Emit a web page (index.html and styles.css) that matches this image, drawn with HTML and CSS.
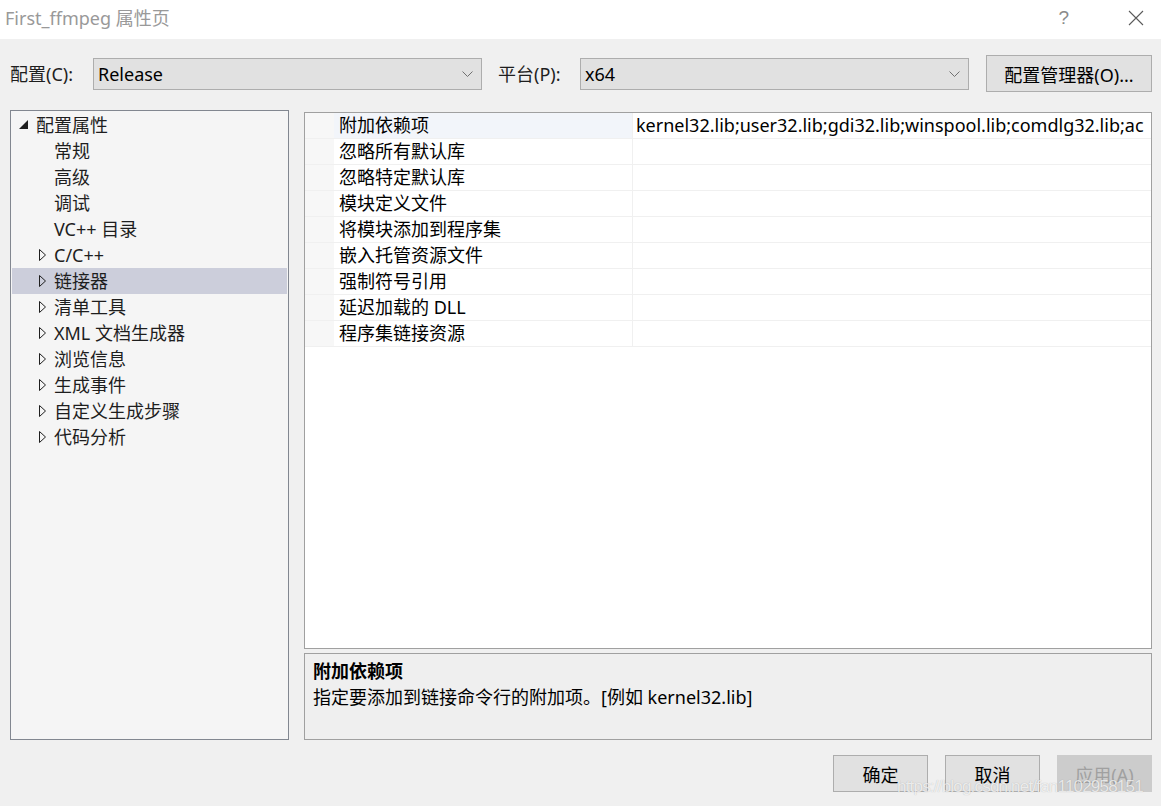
FILE: index.html
```html
<!DOCTYPE html>
<html lang="zh-CN">
<head>
    <meta charset="UTF-8">
    <title>First_ffmpeg 属性页</title>
    <link rel="stylesheet" href="styles.css">
</head>
<body>
    <div class="window">
        <div class="titlebar">
            <span class="title">First_ffmpeg 属性页</span>
            <div class="title-buttons">
                <span class="help">?</span>
                <svg class="close" width="16" height="16" viewBox="0 0 16 16">
                    <path d="M1 1 L15 15 M15 1 L1 15" stroke="#5a5a5a" stroke-width="1.1" fill="none"/>
                </svg>
            </div>
        </div>

        <div class="toolbar">
            <label class="field-label">配置(C):</label>
            <div class="combo">
                <span>Release</span>
                <svg class="chevron" width="11" height="6" viewBox="0 0 11 6"><path d="M0.5 0.5 L5.5 5.5 L10.5 0.5" stroke="#707070" fill="none"/></svg>
            </div>
            <label class="field-label platform-label">平台(P):</label>
            <div class="combo">
                <span>x64</span>
                <svg class="chevron" width="11" height="6" viewBox="0 0 11 6"><path d="M0.5 0.5 L5.5 5.5 L10.5 0.5" stroke="#707070" fill="none"/></svg>
            </div>
            <button class="btn manager-btn">配置管理器(O)...</button>
        </div>

        <div class="main">
            <div class="tree">
                <div class="node root">
                    <span class="twisty"><svg width="10" height="10" viewBox="0 0 10 10"><path d="M9 0 L9 9 L0 9 Z" fill="#1e1e1e"/></svg></span>配置属性
                </div>
                <div class="node leaf">常规</div>
                <div class="node leaf">高级</div>
                <div class="node leaf">调试</div>
                <div class="node leaf">VC++ 目录</div>
                <div class="node branch"><span class="twisty"><svg width="8" height="12" viewBox="0 0 8 12"><path d="M0.5 0.5 L6.5 6 L0.5 11.5 Z" stroke="#1e1e1e" fill="none"/></svg></span>C/C++</div>
                <div class="node branch selected"><span class="twisty"><svg width="8" height="12" viewBox="0 0 8 12"><path d="M0.5 0.5 L6.5 6 L0.5 11.5 Z" stroke="#1e1e1e" fill="none"/></svg></span>链接器</div>
                <div class="node branch"><span class="twisty"><svg width="8" height="12" viewBox="0 0 8 12"><path d="M0.5 0.5 L6.5 6 L0.5 11.5 Z" stroke="#1e1e1e" fill="none"/></svg></span>清单工具</div>
                <div class="node branch"><span class="twisty"><svg width="8" height="12" viewBox="0 0 8 12"><path d="M0.5 0.5 L6.5 6 L0.5 11.5 Z" stroke="#1e1e1e" fill="none"/></svg></span>XML 文档生成器</div>
                <div class="node branch"><span class="twisty"><svg width="8" height="12" viewBox="0 0 8 12"><path d="M0.5 0.5 L6.5 6 L0.5 11.5 Z" stroke="#1e1e1e" fill="none"/></svg></span>浏览信息</div>
                <div class="node branch"><span class="twisty"><svg width="8" height="12" viewBox="0 0 8 12"><path d="M0.5 0.5 L6.5 6 L0.5 11.5 Z" stroke="#1e1e1e" fill="none"/></svg></span>生成事件</div>
                <div class="node branch"><span class="twisty"><svg width="8" height="12" viewBox="0 0 8 12"><path d="M0.5 0.5 L6.5 6 L0.5 11.5 Z" stroke="#1e1e1e" fill="none"/></svg></span>自定义生成步骤</div>
                <div class="node branch"><span class="twisty"><svg width="8" height="12" viewBox="0 0 8 12"><path d="M0.5 0.5 L6.5 6 L0.5 11.5 Z" stroke="#1e1e1e" fill="none"/></svg></span>代码分析</div>
            </div>

            <div class="right">
                <div class="grid">
                    <div class="row current"><span class="gutter"></span><span class="name">附加依赖项</span><span class="value">kernel32.lib;user32.lib;gdi32.lib;winspool.lib;comdlg32.lib;ac</span></div>
                    <div class="row"><span class="gutter"></span><span class="name">忽略所有默认库</span><span class="value"></span></div>
                    <div class="row"><span class="gutter"></span><span class="name">忽略特定默认库</span><span class="value"></span></div>
                    <div class="row"><span class="gutter"></span><span class="name">模块定义文件</span><span class="value"></span></div>
                    <div class="row"><span class="gutter"></span><span class="name">将模块添加到程序集</span><span class="value"></span></div>
                    <div class="row"><span class="gutter"></span><span class="name">嵌入托管资源文件</span><span class="value"></span></div>
                    <div class="row"><span class="gutter"></span><span class="name">强制符号引用</span><span class="value"></span></div>
                    <div class="row"><span class="gutter"></span><span class="name">延迟加载的 DLL</span><span class="value"></span></div>
                    <div class="row"><span class="gutter"></span><span class="name">程序集链接资源</span><span class="value"></span></div>
                </div>
                <div class="description">
                    <div class="desc-title">附加依赖项</div>
                    <div class="desc-text">指定要添加到链接命令行的附加项。[例如 kernel32.lib]</div>
                </div>
            </div>
        </div>

        <div class="footer">
            <button class="btn">确定</button>
            <button class="btn">取消</button>
            <button class="btn disabled">应用(A)</button>
        </div>

        <div class="watermark">https://blog.csdn.net/fan1102958151</div>
    </div>
</body>
</html>
```

FILE: styles.css
```css
/* dialog chrome */
body {
    margin: 0;
    background-color: #f0f0f0;
    font-family: 'Noto Sans', 'Noto Sans CJK SC', sans-serif;
    font-size: 18px;
    color: #1e1e1e;
}

.window {
    position: relative;
    width: 1161px;
    height: 806px;
    overflow: hidden;
}

.titlebar {
    height: 39px;
    background-color: #fff;
    display: flex;
    align-items: center;
    justify-content: space-between;
    padding: 0 17px 3px 5px;
    box-sizing: border-box;
}

.title {
    color: #999;
    line-height: 30px;
}

.title-buttons {
    display: flex;
    align-items: center;
    gap: 59px;
}

.help {
    color: #8a8a8a;
    font-size: 19px;
    font-family: 'Liberation Sans', sans-serif;
}

/* config row */
.toolbar {
    display: flex;
    align-items: center;
    height: 37px;
    margin-top: 16px;
    padding-left: 10px;
}

.field-label {
    width: 83px;
    line-height: 32px;
}

.platform-label {
    width: 82px;
    margin-left: 16px;
}

.combo {
    height: 30px;
    width: 375px;
    border: 1px solid #adadad;
    background-color: #e1e1e1;
    display: flex;
    align-items: center;
    justify-content: space-between;
    padding: 0 8px 0 4px;
    color: #000;
}

.chevron {
    margin-top: 1px;
}

.btn {
    font-family: inherit;
    font-size: 18px;
    color: #000;
    background-color: #e1e1e1;
    border: 1px solid #adadad;
    padding: 0;
    cursor: pointer;
}

.manager-btn {
    width: 166px;
    height: 37px;
    margin-left: 17px;
}

/* tree + grid */
.main {
    display: grid;
    grid-template-columns: 279px 848px;
    column-gap: 15px;
    padding-left: 10px;
    margin-top: 18px;
}

.tree {
    height: 627px;
    border: 1px solid #828790;
    background-color: #f5f5f5;
    padding: 1px 1px 0;
}

.node {
    height: 26px;
    line-height: 26px;
    display: flex;
    align-items: center;
    white-space: nowrap;
}

.node.selected {
    background-color: #cccedb;
}

.twisty {
    width: 18px;
    display: flex;
    align-items: center;
}

.root {
    padding-left: 6px;
}

.root .twisty svg {
    margin-left: 1px;
}

.leaf {
    padding-left: 42px;
}

.branch {
    padding-left: 24px;
}

.branch .twisty svg {
    margin-left: 3px;
}

.right {
    display: flex;
    flex-direction: column;
    margin-top: 2px;
}

.grid {
    height: 535px;
    border: 1px solid #a0a0a0;
    background-color: #fff;
}

.row {
    display: flex;
    height: 25px;
    line-height: 25px;
    border-bottom: 1px solid #f0f0f0;
    color: #000;
}

.gutter {
    width: 29px;
    background-color: #f7f7f7;
}

.name {
    width: 293px;
    padding-left: 5px;
    border-right: 1px solid #f0f0f0;
}

.row.current .name {
    background-color: #f2f5fa;
}

.value {
    flex: 1;
    padding-left: 3px;
    overflow: hidden;
    white-space: nowrap;
}

.description {
    height: 81px;
    margin-top: 4px;
    border: 1px solid #a0a0a0;
    background-color: #efefef;
    padding: 4px 8px 0;
    color: #000;
}

.desc-title {
    font-weight: bold;
    line-height: 26px;
}

.desc-text {
    line-height: 26px;
}

/* bottom buttons */
.footer {
    display: flex;
    justify-content: flex-end;
    gap: 17px;
    margin-top: 15px;
    padding-right: 9px;
}

.footer .btn {
    width: 95px;
    height: 37px;
}

.footer .btn.disabled {
    background-color: #cccccc;
    border-color: #cccccc;
    color: #a0a0a0;
}

.watermark {
    position: absolute;
    left: 897px;
    top: 777px;
    font-family: 'Liberation Sans', sans-serif;
    font-size: 17px;
    letter-spacing: -0.8px;
    color: rgba(255, 255, 255, 0.75);
    text-shadow: 0 0 1px rgba(0, 0, 0, 0.25);
    white-space: nowrap;
}
```
